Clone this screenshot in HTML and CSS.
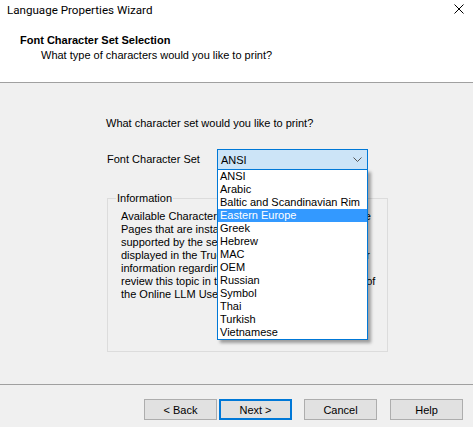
FILE: index.html
```html
<!DOCTYPE html>
<html lang="en">
  <head>
    <meta charset="UTF-8" />
    <meta name="viewport" content="width=device-width, initial-scale=1.0" />
    <title>Language Properties Wizard</title>
    <link rel="stylesheet" href="styles.css">
  </head>
  <body>
    <div class="window">
      <div class="header">
        <div class="titlebar">
          <span class="title">Language Properties Wizard</span>
          <svg class="close" width="10" height="10" viewBox="0 0 10 10">
            <path d="M0.5 0.5 L9.5 9.5 M9.5 0.5 L0.5 9.5" stroke="#000" stroke-width="1" fill="none" />
          </svg>
        </div>
        <div class="heading">Font Character Set Selection</div>
        <div class="subheading">What type of characters would you like to print?</div>
      </div>

      <div class="content">
        <p class="question">What character set would you like to print?</p>
        <div class="row">
          <label class="label">Font Character Set</label>
          <div class="combo">
            <div class="combo-box">
              <span>ANSI</span>
              <svg class="chevron" width="9" height="5" viewBox="0 0 9 5">
                <path d="M0.5 0.5 L4.5 4.5 L8.5 0.5" stroke="#555" stroke-width="1" fill="none" />
              </svg>
            </div>
            <ul class="list">
              <li>ANSI</li>
              <li>Arabic</li>
              <li>Baltic and Scandinavian Rim</li>
              <li class="selected">Eastern Europe</li>
              <li>Greek</li>
              <li>Hebrew</li>
              <li>MAC</li>
              <li>OEM</li>
              <li>Russian</li>
              <li>Symbol</li>
              <li>Thai</li>
              <li>Turkish</li>
              <li>Vietnamese</li>
            </ul>
          </div>
        </div>
        <fieldset class="info">
          <legend>Information</legend>
          <div class="info-text">
            Available Character Sets are provided via the Code<br>
            Pages that are installed on your system and<br>
            supported by the selected font. Character Sets are<br>
            displayed in the TrueType Font drop-down box. For<br>
            information regarding Character Sets, please<br>
            review this topic in the Font Character Set section of<br>
            the Online LLM User's Guide.
          </div>
        </fieldset>
      </div>

      <div class="footer">
        <button class="btn">&lt; Back</button>
        <button class="btn default">Next &gt;</button>
        <button class="btn cancel">Cancel</button>
        <button class="btn help">Help</button>
      </div>
    </div>
  </body>
</html>
```

FILE: styles.css
```css
* {
  margin: 0;
  padding: 0;
  box-sizing: border-box;
}
body {
  width: 473px;
  height: 427px;
  overflow: hidden;
  font-family: "Liberation Sans", Arial, sans-serif;
  font-size: 11px;
  color: #000;
  background-color: #f0f0f0;
}
.window {
  display: flex;
  flex-direction: column;
  height: 427px;
}

.header {
  height: 83px;
  background-color: #fff;
  border-bottom: 1px solid #a0a0a0;
}
.titlebar {
  display: flex;
  justify-content: space-between;
  align-items: center;
  height: 18px;
  padding: 0 9px 0 7px;
}
.title {
  font-family: Roboto, sans-serif;
  font-size: 11.6px;
  line-height: 16px;
  margin-top: 1px;
}
.heading {
  font-weight: bold;
  line-height: 13px;
  margin: 16px 0 0 20px;
}
.subheading {
  line-height: 13px;
  margin: 2px 0 0 41px;
}

.content {
  height: 301px;
  padding: 34px 0 0 106px;
}
.question {
  line-height: 13px;
}
.row {
  display: flex;
  align-items: center;
  margin-top: 19px;
}
.label {
  width: 111px;
  padding-left: 1px;
  line-height: 13px;
}
.combo {
  position: relative;
  width: 151px;
}
.combo-box {
  display: flex;
  justify-content: space-between;
  align-items: center;
  height: 21px;
  padding: 0 5px 0 3px;
  background-color: #cce4f7;
  border: 1px solid #0078d7;
}
.list {
  position: absolute;
  top: 20px;
  left: 0;
  width: 151px;
  list-style: none;
  background-color: #fff;
  border: 1px solid #0078d7;
  box-shadow: 3px 3px 3px rgba(0, 0, 0, 0.35);
  z-index: 2;
}
.list li {
  height: 13px;
  line-height: 13px;
  padding-left: 2px;
  white-space: nowrap;
}
.list .selected {
  background-color: #3399ff;
  color: #fff;
}

.info {
  width: 281px;
  height: 160px;
  margin: 22px 0 0 1px;
  border: 1px solid #dcdcdc;
}
.info legend {
  margin-left: 8px;
  padding: 0 1px;
  line-height: 13px;
}
.info-text {
  margin: 5px 0 0 13px;
  line-height: 13px;
  white-space: nowrap;
}

.footer {
  display: flex;
  justify-content: flex-end;
  padding: 14px 10px 0 0;
  border-top: 1px solid #a0a0a0;
  flex: 1;
}
.btn {
  width: 73px;
  height: 21px;
  font-family: "Liberation Sans", Arial, sans-serif;
  font-size: 11px;
  background-color: #e1e1e1;
  border: 1px solid #adadad;
  margin-left: 2px;
}
.default {
  border: 2px solid #0078d7;
}
.cancel {
  margin-left: 12px;
}
.help {
  margin-left: 13px;
}
```
